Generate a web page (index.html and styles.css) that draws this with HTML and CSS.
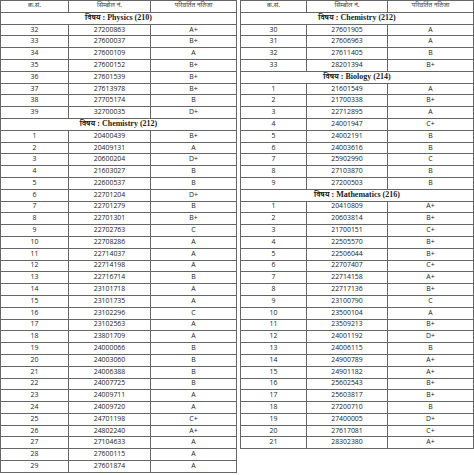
FILE: index.html
```html
<!DOCTYPE html>
<html lang="ne">
<head>
<meta charset="utf-8">
<title>परिवर्तित नतिजा</title>
<link rel="stylesheet" href="styles.css">
</head>
<body>
<div class="tbl left">
  <div class="h">क्र.सं.</div><div class="h">सिम्बोल नं.</div><div class="h">परिवर्तित नतिजा</div>
  <div class="sub">विषय : Physics (210)</div>
  <div>32</div><div>27200863</div><div>A+</div>
  <div>33</div><div>27600037</div><div>B+</div>
  <div>34</div><div>27600109</div><div>A</div>
  <div>35</div><div>27600152</div><div>B+</div>
  <div>36</div><div>27601539</div><div>B+</div>
  <div>37</div><div>27613978</div><div>B+</div>
  <div>38</div><div>27705174</div><div>B</div>
  <div>39</div><div>32700035</div><div>D+</div>
  <div class="sub">विषय : Chemistry (212)</div>
  <div>1</div><div>20400439</div><div>B+</div>
  <div>2</div><div>20409131</div><div>A</div>
  <div>3</div><div>20600204</div><div>D+</div>
  <div>4</div><div>21603027</div><div>B</div>
  <div>5</div><div>22600537</div><div>B</div>
  <div>6</div><div>22701204</div><div>D+</div>
  <div>7</div><div>22701279</div><div>B</div>
  <div>8</div><div>22701301</div><div>B+</div>
  <div>9</div><div>22702763</div><div>C</div>
  <div>10</div><div>22708286</div><div>A</div>
  <div>11</div><div>22714037</div><div>A</div>
  <div>12</div><div>22714198</div><div>A</div>
  <div>13</div><div>22716714</div><div>B</div>
  <div>14</div><div>23101718</div><div>A</div>
  <div>15</div><div>23101735</div><div>A</div>
  <div>16</div><div>23102296</div><div>C</div>
  <div>17</div><div>23102563</div><div>A</div>
  <div>18</div><div>23801709</div><div>A</div>
  <div>19</div><div>24000066</div><div>B</div>
  <div>20</div><div>24003060</div><div>B</div>
  <div>21</div><div>24006388</div><div>B</div>
  <div>22</div><div>24007725</div><div>B</div>
  <div>23</div><div>24009711</div><div>A</div>
  <div>24</div><div>24009720</div><div>A</div>
  <div>25</div><div>24701198</div><div>C+</div>
  <div>26</div><div>24802240</div><div>A+</div>
  <div>27</div><div>27104633</div><div>A</div>
  <div>28</div><div>27600115</div><div>A</div>
  <div>29</div><div>27601874</div><div>A</div>
</div>
<div class="tbl right">
  <div class="h">क्र.सं.</div><div class="h">सिम्बोल नं.</div><div class="h">परिवर्तित नतिजा</div>
  <div class="sub">विषय : Chemistry (212)</div>
  <div>30</div><div>27601905</div><div>A</div>
  <div>31</div><div>27606963</div><div>A</div>
  <div>32</div><div>27611405</div><div>B</div>
  <div>33</div><div>28201394</div><div>B+</div>
  <div class="sub">विषय : Biology (214)</div>
  <div>1</div><div>21601549</div><div>A</div>
  <div>2</div><div>21700338</div><div>B+</div>
  <div>3</div><div>22712895</div><div>A</div>
  <div>4</div><div>24001947</div><div>C+</div>
  <div>5</div><div>24002191</div><div>B</div>
  <div>6</div><div>24003616</div><div>B</div>
  <div>7</div><div>25902990</div><div>C</div>
  <div>8</div><div>27103870</div><div>B</div>
  <div>9</div><div>27200503</div><div>B</div>
  <div class="sub">विषय : Mathematics (216)</div>
  <div>1</div><div>20410809</div><div>A+</div>
  <div>2</div><div>20603814</div><div>B+</div>
  <div>3</div><div>21700151</div><div>C+</div>
  <div>4</div><div>22505570</div><div>B+</div>
  <div>5</div><div>22506044</div><div>B+</div>
  <div>6</div><div>22707407</div><div>C+</div>
  <div>7</div><div>22714158</div><div>A+</div>
  <div>8</div><div>22717136</div><div>B+</div>
  <div>9</div><div>23100790</div><div>C</div>
  <div>10</div><div>23500104</div><div>A</div>
  <div>11</div><div>23509213</div><div>B+</div>
  <div>12</div><div>24001192</div><div>D+</div>
  <div>13</div><div>24006115</div><div>B</div>
  <div>14</div><div>24900789</div><div>A+</div>
  <div>15</div><div>24901182</div><div>A+</div>
  <div>16</div><div>25602543</div><div>B+</div>
  <div>17</div><div>25603817</div><div>B+</div>
  <div>18</div><div>27200710</div><div>B</div>
  <div>19</div><div>27400005</div><div>D+</div>
  <div>20</div><div>27617081</div><div>C+</div>
  <div>21</div><div>28302380</div><div>A+</div>
</div>
</body>
</html>
```
FILE: styles.css
```css
html, body {
  margin: 0;
  padding: 0;
  background: #ffffff;
}
body {
  display: flex;
  align-items: flex-start;
  gap: 3px;
  width: 474px;
  overflow: hidden;
  font-family: "Open Sans", "Liberation Sans", "Noto Sans Devanagari", sans-serif;
  color: #222222;
}
.tbl {
  display: grid;
  grid-auto-rows: 10.8px;
  gap: 1px;
  padding: 1px;
  background: #666666;
}
.tbl.left {
  grid-template-columns: 67px 81px 85px;
}
.tbl.right {
  grid-template-columns: 65px 80px 85px;
}
.tbl > div {
  background: #ffffff;
  display: flex;
  align-items: center;
  justify-content: center;
  font-size: 6.9px;
  line-height: 1;
  white-space: nowrap;
  overflow: hidden;
}
.tbl > .h {
  font-family: "Noto Sans Devanagari", "Noto Sans", "Lohit Devanagari", sans-serif;
  font-size: 6.5px;
  color: #444444;
}
.tbl > .sub {
  grid-column: 1 / -1;
  font-family: "Liberation Serif", "Noto Serif Devanagari", "Noto Sans Devanagari", serif;
  font-weight: bold;
  font-size: 8px;
  color: #222222;
}
```
